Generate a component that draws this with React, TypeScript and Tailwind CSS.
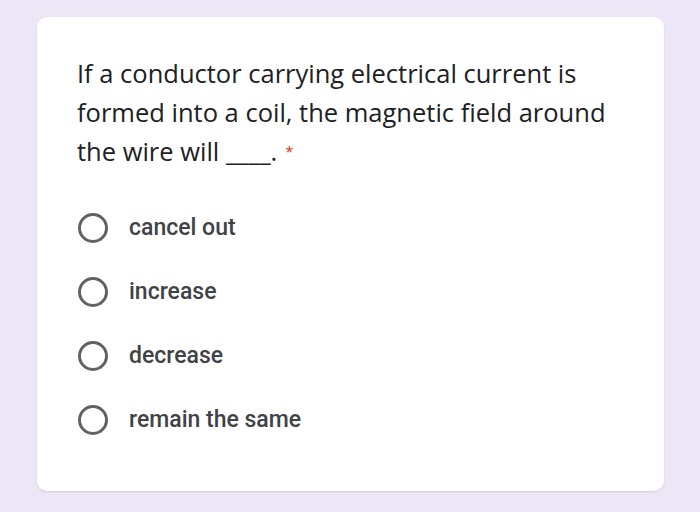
import React from 'react';

const options = ['cancel out', 'increase', 'decrease', 'remain the same'];

export default function App() {
  return (
    <div className="h-[512px] w-[700px] bg-[#ede6f6] pt-[17px] pb-[21px] pl-[37px] pr-[36px]">
      <div className="h-full rounded-[10px] bg-white shadow-[0_1px_2px_rgba(60,64,67,0.15)] pl-[40px] pr-[20px] pt-[37px]">
        {/* Question */}
        <p
          className="text-[25.5px] leading-[39px] text-[#202124]"
          style={{ fontFamily: '"Open Sans", Roboto, sans-serif' }}
        >
          If a conductor carrying electrical current is
          <br />
          formed into a coil, the magnetic field around
          <br />
          the wire will ____.
          <span className="ml-[8px] align-top text-[15px] text-[#d93025]">*</span>
        </p>

        {/* Options */}
        <div className="mt-[25px] flex flex-col">
          {options.map((opt) => (
            <div key={opt} className="flex h-[64px] items-center">
              <div className="ml-[1px] h-[30px] w-[30px] rounded-full border-[3px] border-[#5f6368]" />
              <span
                className="ml-[21px] text-[23px] font-medium text-[#404346]"
                style={{ fontFamily: 'Roboto, "Liberation Sans", sans-serif' }}
              >
                {opt}
              </span>
            </div>
          ))}
        </div>
      </div>
    </div>
  );
}
